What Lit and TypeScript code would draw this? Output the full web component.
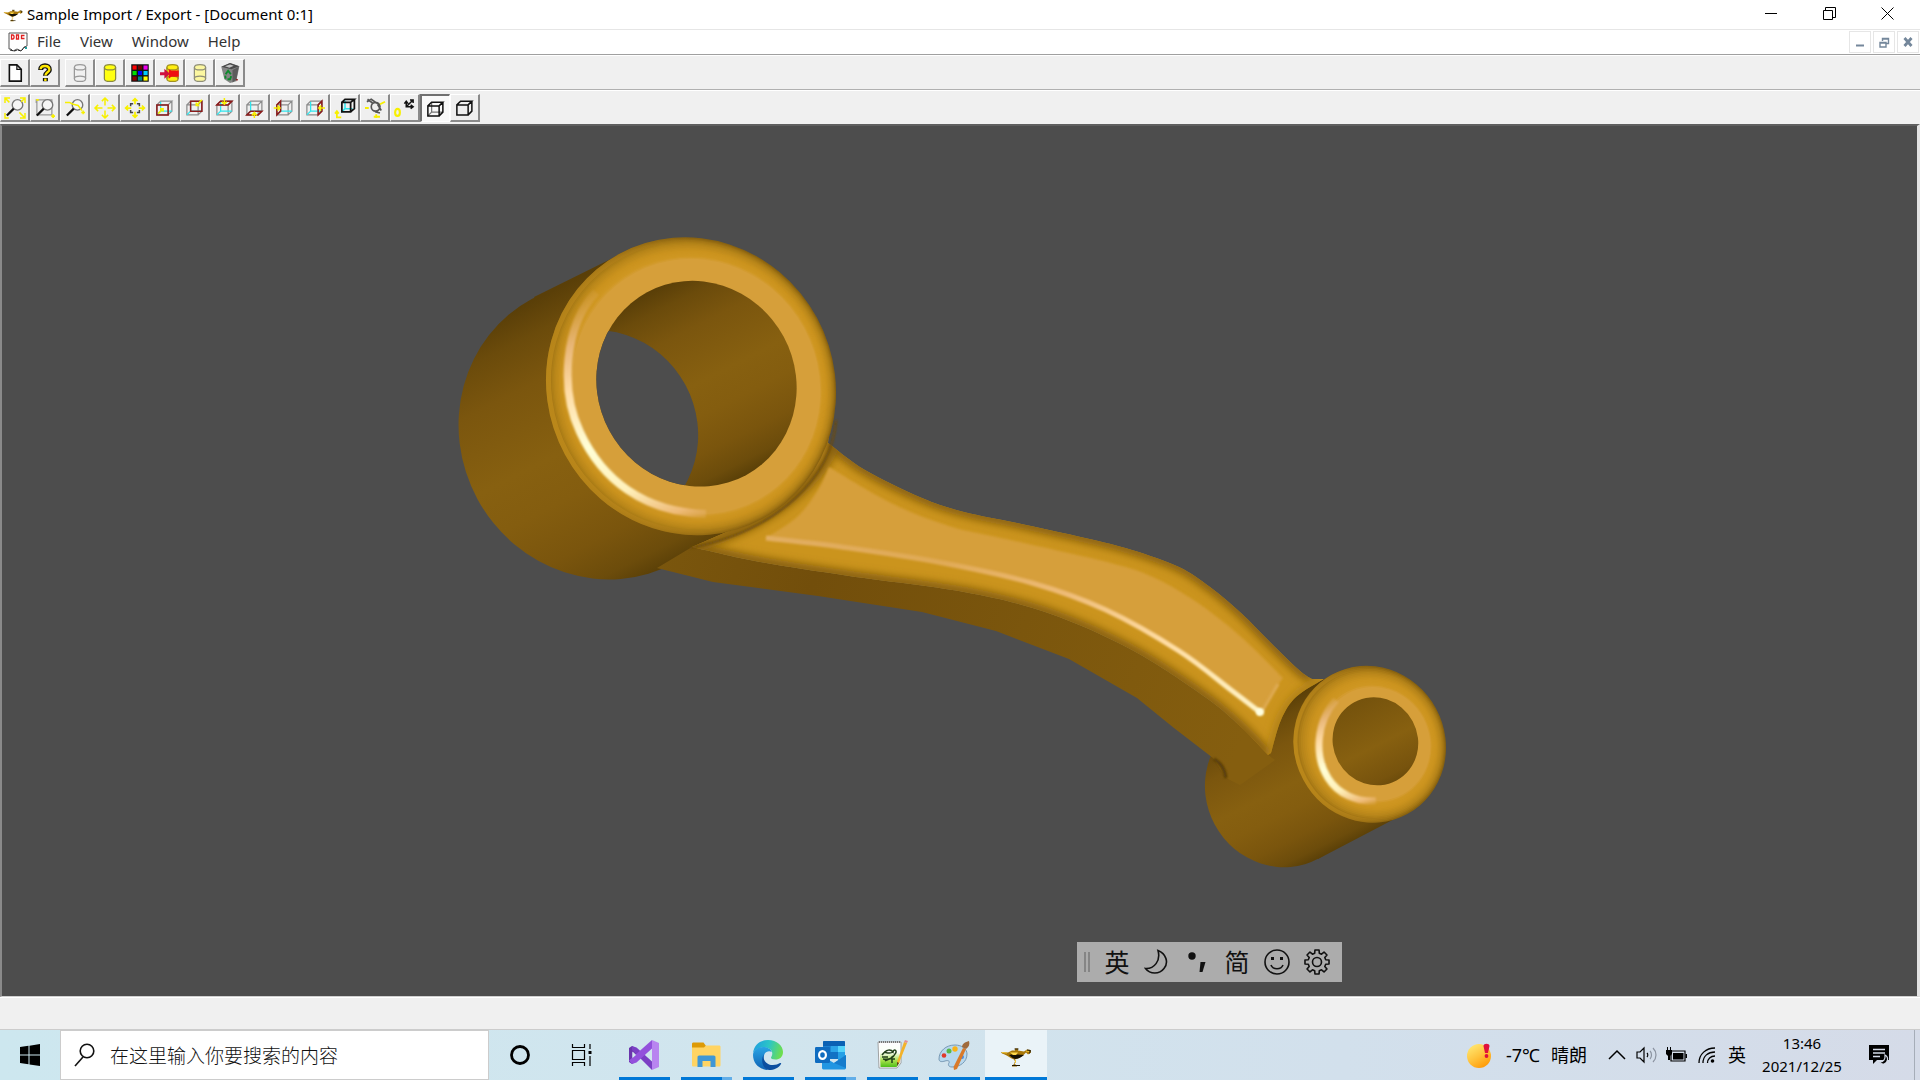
import { LitElement, html, svg, css, TemplateResult } from "lit";
import { customElement } from "lit/decorators.js";

type Point = [number, number];

/* ---------- toolbar glyphs, drawn on a 16 unit grid ---------- */

const glyph = (body: unknown) =>
  html`<svg class="glyph" viewBox="0 0 16 16" aria-hidden="true">${body}</svg>`;

const GREY = "#8c8c8c";
const RED = "#8b1a1a";
const CYAN = "#2fe6ee";
const YELLOW = "#f7f000";

const line = (d: string, color: string, width = 1) =>
  svg`<path d=${d} fill="none" stroke=${color} stroke-width=${width}></path>`;

const FACES: Record<string, string> = {
  front: "M1.5 5.5h9v8h-9z",
  back: "M4.5 2.5h9v8h-9z",
  top: "M1.5 5.5l3-3h9l-3 3z",
  bottom: "M1.5 13.5l3-3h9l-3 3z",
  left: "M1.5 5.5l3-3v8l-3 3z",
  right: "M10.5 5.5l3-3v8l-3 3z",
};

const cube = (face: string, arrow: string) =>
  glyph([
    line("M1.5 5.5h9v8h-9zM1.5 5.5l3-3h9l-3 3M13.5 2.5v8l-3 3", GREY),
    line("M4.5 3v7.500h9M4.500 10.500l-3 3", CYAN),
    line(FACES[face], RED, 1.2),
    line(arrow, YELLOW, 1.2),
  ]);

const solidCube = (hidden: unknown) => [
  hidden,
  line("M1.5 5.5h9v8h-9zM1.5 5.5l3-3h9l-3 3M13.5 2.5v8l-3 3", "#111", 1.2),
];

const lens = svg`
  <circle cx="10" cy="5.500" r="4.200" fill="#f6f6f6" stroke="#777" stroke-width="1.100"></circle>
  <path d="M7 8.500L1.500 14" stroke="#111" stroke-width="1.800"></path>`;

const cylinder = (fill: string, stroke: string, ring: boolean) => svg`
  <path d="M3.500 3.500c0-3 9-3 9 0v9c0 3-9 3-9 0z" fill=${fill} stroke=${stroke}></path>
  <path d="M3.500 3.500c0 2.700 9 2.700 9 0" fill="none" stroke=${stroke}></path>
  ${ring ? svg`<path d="M3.500 12.500c0-2.700 9-2.700 9 0" fill="none" stroke=${stroke}></path>` : ""}`;

const PALETTE = ["#f00", "#700000", "#e0e", "#0d0", "#00f", "#0cf", "#800", "#088", "#ff0"];

const fileTools: [string, TemplateResult][] = [
  ["New document", glyph(svg`<path d="M3.500 1.500h6l3.500 3.500v9.500h-9.500z" fill="#fff" stroke="#111" stroke-width="1.300"></path><path d="M9.500 1.500v3.500h3.500" fill="none" stroke="#111"></path>`)],
  ["About", glyph(svg`
    <path d="M4.500 5.500c0-4.500 7-4.500 7 0 0 2-3.200 2.200-3.200 4.700M8.300 12v2.600" fill="none" stroke="#111" stroke-width="4"></path>
    <path d="M4.500 5c.2-3.500 7-3.500 7 .3 0 2-3.200 2.200-3.200 4.700M8.300 12.300v2" fill="none" stroke="#ffe800" stroke-width="1.900"></path>`)],
];

const shapeTools: [string, TemplateResult][] = [
  ["Wireframe", glyph(cylinder("#f0f0f0", "#999", true))],
  ["Shading", glyph(cylinder("#ffff10", "#8a8a40", false))],
  ["Color", glyph(svg`<path d="M1 1h14v14H1z" fill="#111"></path>${PALETTE.map(
    (c, i) => svg`<path d="M${2 + (i % 3) * 4.4} ${2 + Math.floor(i / 3) * 4.4}h3.300v3.300h-3.300z" fill=${c}></path>`)}`)],
  ["Material", glyph(svg`<g transform="translate(2 0)">${cylinder("#ffee10", "#a09020", true)}</g><path d="M7 5l2 1h6v5H9L7 12.500z" fill="#f01010"></path><path d="M0 7.300h3.500V4.500L8 8.500l-4.500 4V9.700H0z" fill="#d0103c"></path>`)],
  ["Transparency", glyph(cylinder("#fbf7a0", "#8f8f78", true))],
  ["Delete", glyph(svg`
    <path d="M1 3l7-3 7.500 2.500-2.500 12-5 1.500L3.500 13z" fill="#858585"></path>
    <path d="M1 3l7-3 7.500 2.500L9 5z" fill="#4a4a4a"></path>
    <path d="M4 2.600l4-1.400 3 1-3.500 1.600z" fill="#c4c4c4"></path>
    <path d="M10 5.500l5-2.500-2 10.500-3 2z" fill="#5c5c5c"></path>
    <path d="M12.500 12.500l2 .5-1 1.500z" fill="#8b1a1a"></path>
    <path d="M4.500 9l2-2.800L8.700 9M9 10.500L8 13H6M4.500 12.500l-.3-2.400" fill="none" stroke="#0c8a2c" stroke-width="1.500"></path>`)],
];

const viewTools: [string, TemplateResult, boolean?][] = [
  ["Fit all", glyph([lens, line("M0 4V0h4M0 0l3.500 3.500M12 0h4v4M16 0l-3 3M12 16h4v-4M16 16l-4.500-4.500M0 12v4h3", YELLOW, 1.2)])],
  ["Zoom window", glyph([line("M1 1v3M1.500 1.500h12v12h-12z", "#999"), lens, line("M1 1.500h2M13 14.500h3M14.500 13v3", YELLOW, 1.4)])],
  ["Zoom", glyph([lens, line("M0 3.500h3.500l3 1.500 4 1 3 4M13 11.500h3M14.500 10v3", YELLOW, 1.2)])],
  ["Pan", glyph(line("M8 6V0M5.500 2.500L8 0l2.500 2.500M8 10v6M5.500 13.500L8 16l2.500-2.500M6 8H0M2.500 5.500L0 8l2.500 2.500M10 8h6M13.500 5.500L16 8l-2.500 2.500", YELLOW, 1.2))],
  ["Global pan", glyph([line("M8 5V0M6 2.500L8 .5l2 2M8 11v5M6 13.500l2 2 2-2M5 8H0M2.500 6L.5 8l2 2M11 8h5M13.500 6l2 2-2 2", YELLOW, 1.4), line("M4.500 6.500v-2h2M9.500 4.500h2v2M11.500 9.500v2h-2M6.500 11.500h-2v-2", "#444", 1.2)])],
  ["Front", cube("front", "M2.500 12.500l4-4M4 8.500h2.500V11")],
  ["Back", cube("back", "M13.500 1.500L9 6M9 3.500V6h2.500")],
  ["Top", cube("top", "M7.500 0v5M5.500 3l2 2 2-2")],
  ["Bottom", cube("bottom", "M7.500 16v-5M5.500 14l2-2.500 2 2.500")],
  ["Left", cube("left", "M-1 8h5M2 6l2 2-2 2")],
  ["Right", cube("right", "M16 8h-5M13 6l-2 2 2 2")],
  ["Axonometric", glyph([line("M8 2v6.500h6M8 8.500l-3 3", CYAN, 1.2), line("M5.500 3.500h7v7.500h-7zM5.500 3.500l2.500-2.500h7.500l-3 2.500M15.500 1v7.500l-3 2.500", "#111", 1.4), line("M5 15.500H1.500v-4M0 12.500l1.500-2 1.500 2", YELLOW, 1.4)])],
  ["Dynamic rotation", glyph([line("M2 1l4 3M1.500 3l3.500-2 5 3.500M12 7a3.500 3.500 0 1 1-7 0 3.500 3.500 0 0 1 7 0M10 5l3 5M12 12l-4-1", "#555", 1.3), line("M0 8h3M12 5l4-2M7 15h5M9 13v3", YELLOW, 1.5)])],
  ["Reset view", glyph([svg`<ellipse cx="2" cy="11.500" rx="1.900" ry="2.800" fill="none" stroke=${YELLOW} stroke-width="1.700"></ellipse>`, line("M9 3v4h5M9 7l5-5M7.500 4.500L9 2.500l1.500 2M12 1.500h2.500V4M12.500 5.500l2 1.500-2 1.500", "#111", 1.2)])],
  ["Hidden off", glyph(solidCube(line("M4.500 3v7.500h9M4.500 10.500l-3 3", "#777"))), true],
  ["Hidden on", glyph(solidCube(""))],
];

/* ---------- shaded part ---------- */

const TILT = 61.6;
const AXIS: Point = [Math.cos((TILT * Math.PI) / 180), Math.sin((TILT * Math.PI) / 180)];

/* Tilted oval as a path, so that shading stays in drawing coordinates. */
const ovalPath = (cx: number, cy: number, r: number) => {
  const dx = r * AXIS[0];
  const dy = r * AXIS[1];
  const arc = `A${r} ${r * 0.952} ${TILT} 0 1`;
  return `M${cx - dx} ${cy - dy}${arc} ${cx + dx} ${cy + dy}${arc} ${cx - dx} ${cy - dy}Z`;
};
const oval = (cx: number, cy: number, r: number, fill: string) =>
  svg`<path d=${ovalPath(cx, cy, r)} fill=${fill}></path>`;

const mix = (stops: [number, number[]][], t: number) => {
  let i = 1;
  while (i < stops.length - 1 && stops[i][0] < t) i++;
  const [t0, a] = stops[i - 1];
  const [t1, b] = stops[i];
  const k = (t - t0) / (t1 - t0);
  return `rgb(${a.map((v, n) => Math.round(v + (b[n] - v) * k)).join(",")})`;
};

const RIM: [number, number[]][] = [
  [0, [138, 99, 16]],
  [0.12, [162, 117, 20]],
  [0.3, [184, 134, 26]],
  [0.6, [203, 147, 30]],
  [0.85, [207, 151, 34]],
  [1, [214, 159, 58]],
];

/* A rolled rim: nested ovals running from the silhouette in to the flat face. */
const rim = (outer: number[], inner: number[], steps: number) =>
  Array.from({ length: steps + 1 }, (_, i) => {
    const t = i / steps;
    const [x, y, r] = outer.map((v, n) => v + (inner[n] - v) * t);
    return oval(x, y, r, mix(RIM, t));
  });

/* Smooth curve through a list of points. */
const through = (pts: Point[], start = "M") => {
  let d = `${start}${pts[0][0]} ${pts[0][1]}`;
  for (let i = 0; i < pts.length - 1; i++) {
    const p0 = pts[Math.max(i - 1, 0)];
    const p1 = pts[i];
    const p2 = pts[i + 1];
    const p3 = pts[Math.min(i + 2, pts.length - 1)];
    d += `C${p1[0] + (p2[0] - p0[0]) / 6} ${p1[1] + (p2[1] - p0[1]) / 6} ${p2[0] - (p3[0] - p1[0]) / 6} ${p2[1] - (p3[1] - p1[1]) / 6} ${p2[0]} ${p2[1]}`;
  }
  return d;
};

const ridge: Point[] = [[828, 443], [865, 470], [922, 498], [964, 512], [1017, 523], [1085, 538], [1132, 550], [1179, 567], [1210, 587], [1241, 613], [1268, 640], [1299, 670], [1312, 679]];
const faceTop: Point[] = [[829, 467], [891, 503], [949, 526], [1006, 539], [1111, 563], [1153, 577], [1189, 597], [1221, 620], [1252, 647], [1283, 678]];
const faceLow: Point[] = [[1261, 713], [1231, 690], [1179, 651], [1106, 610], [1032, 583], [943, 563], [849, 548], [766, 538]];
const faceLeft: Point[] = [[766, 538], [797, 517], [818, 490], [829, 467]];
const rollLow: Point[] = [[1268, 755], [1241, 727], [1205, 697], [1132, 650], [1048, 613], [964, 592], [849, 576], [760, 562], [692, 547]];
const joint: Point[] = [[1324, 679], [1296, 697], [1281, 720], [1271, 753]];
const keel: Point[] = [[657, 568], [713, 582], [818, 596], [922, 612], [996, 631], [1069, 659], [1137, 698], [1174, 728], [1213, 758]];

const armShape = `${through(ridge)}L1324 679${through(joint, "L")}${through(rollLow, "L")}L740 526L830 420Z`;
const faceShape = `${through(faceTop)}Q1270 695 1261 713${through(faceLow, "L")}${through(faceLeft, "L")}Z`;
const flank = `M${keel.map((p) => p.join(" ")).join("L")}L1226 778L1240 785L1275 760${through(rollLow, "L")}Z`;

const barrelStops = svg`
  <stop offset="0" stop-color="#5a3f08"></stop>
  <stop offset=".1" stop-color="#6b4b0b"></stop>
  <stop offset=".25" stop-color="#7b560e"></stop>
  <stop offset=".5" stop-color="#876010"></stop>
  <stop offset=".65" stop-color="#845d0f"></stop>
  <stop offset=".82" stop-color="#7a550d"></stop>
  <stop offset=".94" stop-color="#6c4c0b"></stop>
  <stop offset="1" stop-color="#5c4108"></stop>`;

const shineStops = svg`
  <stop offset="0" stop-color="#dba655" stop-opacity="0"></stop>
  <stop offset=".2" stop-color="#e8b676"></stop>
  <stop offset=".36" stop-color="#ffdca6"></stop>
  <stop offset=".58" stop-color="#ffffd6"></stop>
  <stop offset=".78" stop-color="#fff0ba"></stop>
  <stop offset=".92" stop-color="#efbb78"></stop>
  <stop offset="1" stop-color="#dba655" stop-opacity="0"></stop>`;

const part = svg`
  <defs>
    <linearGradient id="barrelA" gradientUnits="userSpaceOnUse" x1="536" y1="299" x2="670" y2="563">${barrelStops}</linearGradient>
    <linearGradient id="boreA" gradientUnits="userSpaceOnUse" x1="650" y1="292" x2="743" y2="475">${barrelStops}</linearGradient>
    <linearGradient id="barrelB" gradientUnits="userSpaceOnUse" x1="1246" y1="719" x2="1316" y2="859">${barrelStops}</linearGradient>
    <linearGradient id="boreB" gradientUnits="userSpaceOnUse" x1="1353" y1="697" x2="1402" y2="793">
      <stop offset="0" stop-color="#73510c"></stop><stop offset=".5" stop-color="#876010"></stop><stop offset=".8" stop-color="#77530d"></stop><stop offset="1" stop-color="#5c4108"></stop>
    </linearGradient>
    <linearGradient id="flankFill" gradientUnits="userSpaceOnUse" x1="660" y1="560" x2="1230" y2="770">
      <stop offset="0" stop-color="#7a560d"></stop><stop offset=".25" stop-color="#724e0b"></stop><stop offset=".6" stop-color="#7b560d"></stop><stop offset="1" stop-color="#855e0f"></stop>
    </linearGradient>
    <linearGradient id="edgeLight" x1="0" y1=".6" x2="1" y2=".4">
      <stop offset="0" stop-color="#bb881a"></stop><stop offset=".3" stop-color="#b4821a" stop-opacity=".7"></stop><stop offset=".6" stop-color="#a87a18" stop-opacity="0"></stop>
    </linearGradient>
    <linearGradient id="shineA" gradientUnits="userSpaceOnUse" x1="600" y1="278" x2="690" y2="530">${shineStops}</linearGradient>
    <linearGradient id="shineB" gradientUnits="userSpaceOnUse" x1="1330" y1="690" x2="1372" y2="808">${shineStops}</linearGradient>
    <linearGradient id="shineArm" gradientUnits="userSpaceOnUse" x1="766" y1="0" x2="1262" y2="0">
      <stop offset="0" stop-color="#e2ae62"></stop><stop offset=".35" stop-color="#e0aa56"></stop><stop offset=".6" stop-color="#eebb76"></stop><stop offset=".8" stop-color="#ffdca2"></stop><stop offset="1" stop-color="#fff4c6"></stop>
    </linearGradient>
    <filter id="soft1" x="-20%" y="-20%" width="140%" height="140%"><feGaussianBlur stdDeviation="1"></feGaussianBlur></filter>
    <filter id="soft4" x="-20%" y="-20%" width="140%" height="140%"><feGaussianBlur stdDeviation="4"></feGaussianBlur></filter>
    <clipPath id="armClip"><path d=${armShape}></path></clipPath>
    <clipPath id="boreClip"><path d=${ovalPath(696.5, 383.7, 104)}></path></clipPath>
  </defs>

  ${oval(603, 431, 150, "url(#barrelA)")}
  <path d="M534 297L627 251L760 518L671 564Z" fill="url(#barrelA)"></path>

  ${oval(1281, 789, 79, "url(#barrelB)")}
  <path d="M1246 719L1324 679L1404 814L1318 859Z" fill="url(#barrelB)"></path>

  <path d=${flank} fill="url(#flankFill)"></path>
  <path d="M1214 759C1221 763 1225 770 1226 778" fill="none" stroke="#553b07" stroke-width="3" filter="url(#soft1)"></path>

  <path d=${armShape} fill="#cb941d"></path>
  <g clip-path="url(#armClip)">
    <path d=${through(ridge)} fill="none" stroke="#805a10" stroke-width="9" filter="url(#soft4)"></path>
    <path d=${through(rollLow)} fill="none" stroke="#805a10" stroke-width="10" filter="url(#soft4)"></path>
    <path d=${through(joint)} fill="none" stroke="#a87a18" stroke-width="7" filter="url(#soft4)"></path>
    <path d="M838 420C838 470 780 520 690 548" fill="none" stroke="#8a6210" stroke-width="12" filter="url(#soft4)"></path>
    <path d=${faceShape} fill="#d69f3a" filter="url(#soft1)"></path>
    <path d=${through(faceLow)} fill="none" stroke="url(#shineArm)" stroke-width="5" filter="url(#soft1)"></path>
    <path d="M1261 713L1278 684" stroke="#dfab55" stroke-width="3" filter="url(#soft1)"></path>
    <circle cx="1260" cy="712" r="4" fill="#ffffe0" filter="url(#soft1)"></circle>
  </g>
  <path d="M836 420C832 476 780 530 690 548" fill="none" stroke="#6b4b0b" stroke-width="2" filter="url(#soft1)"></path>

  ${rim([691, 386.3, 150.6], [696, 386.5, 129], 18)}
  <path d=${ovalPath(691, 386.3, 148)} fill="none" stroke="url(#edgeLight)" stroke-width="5"></path>
  <path d="M596 292C564 326 560 390 580 432C602 480 644 512 706 514" fill="none" stroke="url(#shineA)" stroke-width="8" filter="url(#soft1)"></path>
  ${oval(696.5, 383.7, 104, "url(#boreA)")}
  <g clip-path="url(#boreClip)">${oval(600, 431, 102, "#4d4d4d")}</g>

  ${rim([1369.6, 744.3, 79.3], [1375, 744, 57.5], 14)}
  <path d=${ovalPath(1369.6, 744.3, 77)} fill="none" stroke="url(#edgeLight)" stroke-width="4"></path>
  <path d="M1336 700C1316 722 1314 756 1328 778C1338 794 1356 802 1376 801" fill="none" stroke="url(#shineB)" stroke-width="7" filter="url(#soft1)"></path>
  ${oval(1375.4, 741.3, 44.5, "url(#boreB)")}`;

/* ---------- application icons ---------- */

const lamp = html`<svg class="app-icon" viewBox="0 0 32 32" aria-hidden="true">
  <path d="M1 13l7 .5 4-2h3V9.500h3v2l6 1 3-2 3.500.5.5 2.500-3 2-2-2-3 3-4 2.500-4 1.500-1 4 3 2v1H12v-1l3-2-1-4c-5-2-6-4-12-6z" fill="#a87708"></path>
  <path d="M9 16c5-1 11 0 15 0-3 2.500-6 4-9 4-2.500-1-4-2-6-4z" fill="#161005"></path>
  <path d="M10 13.500h8l-2 2.500h-3z" fill="#ffd84a"></path>
  <path d="M2 13.500l5 .5M26 12l3 .5M15.500 21v3" stroke="#f2c63a" fill="none"></path>
  <path d="M12 26.500h8M14.500 10h4M27 11l3.500.5-1 3" stroke="#241a04" fill="none"></path></svg>`;

const taskApps: { name: string; icon: TemplateResult; mode?: string }[] = [
  {
    name: "Visual Studio",
    icon: html`<svg class="app-icon" viewBox="0 0 32 32" aria-hidden="true">
      <path d="M1 9l3-2 4 2.500v13L4 25l-3-2z" fill="#6a34ac"></path>
      <path d="M4.500 12.500L8 16l-3.500 3.500z" fill="#d3e5ee"></path>
      <path d="M4 7l4.500 1.500L24 22.500V31L4 11z" fill="#7a3fc4"></path>
      <path d="M4 25l4.500-1.500L24 9.500V1L1 21.500z" fill="#9351dc"></path>
      <path d="M4.500 13v6L8 16z" fill="#d3e5ee"></path>
      <path d="M24 1l7 3v24l-7 3z" fill="#b884f0"></path></svg>`,
  },
  {
    name: "File Explorer",
    mode: "multi",
    icon: html`<svg class="app-icon" viewBox="0 0 32 32" aria-hidden="true">
      <path d="M2 5c0-1 .5-1.500 1.500-1.500h10L16 7v5H2z" fill="#dd9a06"></path>
      <path d="M2 8.500h12L16 6.500h13c1 0 1.500.5 1.500 1.500v18c0 1-.5 1.500-1.500 1.500H3.500C2.500 27.500 2 27 2 26z" fill="#ffd463"></path>
      <path d="M7.500 28V18.500c0-1.200.6-1.900 1.800-1.900h14.400c1.200 0 1.800.7 1.800 1.900V28h-5v-6h-8v6z" fill="#3f97d6"></path></svg>`,
  },
  {
    name: "Microsoft Edge",
    icon: html`<svg class="app-icon" viewBox="0 0 32 32" aria-hidden="true">
      <defs>
        <linearGradient id="edgeTop" x1="0" y1=".3" x2="1" y2=".5"><stop offset="0" stop-color="#1e9fe0"></stop><stop offset=".5" stop-color="#2cc5c6"></stop><stop offset="1" stop-color="#6fdf4c"></stop></linearGradient>
        <linearGradient id="edgeLow" x1="0" y1="0" x2="0" y2="1"><stop offset="0" stop-color="#2aa4e4"></stop><stop offset="1" stop-color="#0f62b4"></stop></linearGradient>
      </defs>
      <path d="M1 14C2 6 8 1 16 1c9 0 15 6 15 12 0 5-3.500 7.500-7.500 7.500-3.500 0-4.500-1-4.500-2 0-.8 1.300-1.500 1.300-4C20.300 11 17 8.500 12 8.500 6 8.500 2.500 11 1 14z" fill="url(#edgeTop)"></path>
      <path d="M1 16c0-4.500 5-8 10-8 4.500 0 8 2 8.800 5-2-1.500-5.800-1-7.300 2C10 20 13 31 17 31 8 31 1 25 1 16z" fill="url(#edgeLow)"></path>
      <path d="M12 15c-2 5 2 11 9 11 3 0 5-.8 7-2 1-.4 1.500.3 1 1C26.500 29 22 31 17 31 10 30 8.500 20 12 15z" fill="#0c4fa0"></path></svg>`,
  },
  {
    name: "Outlook",
    mode: "multi",
    icon: html`<svg class="app-icon" viewBox="0 0 32 32" aria-hidden="true">
      <path d="M9 3c0-.6.400-1 1-1h20c.6 0 1 .4 1 1v16H9z" fill="#0a61b4"></path>
      <path d="M9 7h7.500v6H9z" fill="#1a7fd0"></path><path d="M16.500 7H24v6h-7.500z" fill="#2ba4e8"></path><path d="M24 7h7v6h-7z" fill="#54d3fa"></path>
      <path d="M9 13h15v7H9z" fill="#1272c4"></path><path d="M24 13h7v6l-7 3z" fill="#26a0e6"></path>
      <path d="M8 17l12 7 12-8v13c0 .8-.6 1.400-1.400 1.400H9.400C8.600 30.400 8 29.800 8 29z" fill="#2196e2"></path>
      <path d="M20 24l12-8v13z" fill="#167ccc"></path>
      <rect x="1" y="8" width="15" height="16" rx="1.200" fill="#0f6cc0"></rect>
      <ellipse cx="8.500" cy="16" rx="3.400" ry="3.900" fill="none" stroke="#fff" stroke-width="2.200"></ellipse></svg>`,
  },
  {
    name: "Notepad++",
    icon: html`<svg class="app-icon" viewBox="0 0 32 32" aria-hidden="true">
      <defs><linearGradient id="padFill" x1="0" y1="0" x2="0" y2="1"><stop offset=".3" stop-color="#fcfffa"></stop><stop offset=".7" stop-color="#a4e04c"></stop><stop offset="1" stop-color="#4fbf18"></stop></linearGradient></defs>
      <path d="M2 3h23v21l-4 5H3z" fill="#fdfdfd" stroke="#8d8d8d" stroke-width=".8"></path>
      <path d="M3.500 7h20v17l-3 4h-16z" fill="url(#padFill)"></path>
      <path d="M3 3h22" stroke="#777" stroke-width="2" stroke-dasharray="1 1"></path>
      <path d="M6 16c4-6 9-6 11-3 1-4 5-1 2 2-2 4-6 6-12 5M8 13c4 1 6 2 9 0M9 22c2-2 5 0 8-5M16 24v-4h3M6 18h6" fill="none" stroke="#22401a" stroke-width="1.500"></path>
      <path d="M28 3l3 1-8 20-2 2v-3z" fill="#f3b229"></path><path d="M28 3l1-2 3 1-1 2z" fill="#e58f8f"></path><path d="M21 23l2 1-2 3z" fill="#5a4020"></path></svg>`,
  },
  {
    name: "Paint",
    icon: html`<svg class="app-icon" viewBox="0 0 32 32" aria-hidden="true">
      <path d="M1 20C1 12 8 6 17 6c7 0 12 4 12 9 0 8-7 13-15 13-4 0-4-3-3-4 1-2-1-3-4-2-3 1-6 1-6-2z" fill="#b7d8ee" stroke="#7899b4"></path>
      <circle cx="6" cy="16.500" r="2.300" fill="#e03a2c"></circle><circle cx="11" cy="12" r="2.500" fill="#58b848"></circle><circle cx="17" cy="10" r="2.700" fill="#f7b318"></circle>
      <circle cx="24" cy="18" r="2" fill="#4b8be0"></circle>
      <path d="M25 9l3 1-9 20-3 1-.5-3z" fill="#d97a2a"></path><path d="M24 8c0-3 3-5 7-6 1 3 0 6-3 8z" fill="#a06a3c"></path></svg>`,
  },
  { name: "Sample Import / Export", icon: lamp, mode: "active" },
];

@customElement("app-root")
export class AppRoot extends LitElement {
  static styles = css`
    :host {
      display: flex;
      flex-direction: column;
      height: 100vh;
      min-height: 600px;
      background: #f0f0f0;
      color: #000;
      font: 15px/20px "Noto Sans", "Noto Sans CJK SC", sans-serif;
      overflow: hidden;
    }
    * { box-sizing: border-box; }
    button {
      display: flex;
      align-items: center;
      justify-content: center;
      margin: 0;
      padding: 0;
      border: 0;
      background: none;
      color: inherit;
      font: inherit;
    }
    svg { display: block; flex: none; }

    .title-bar { display: flex; align-items: center; height: 29px; flex: none; background: #fff; padding: 0 4px 2px 3px; }
    .title-bar .app-icon { width: 20px; height: 20px; }
    .title { flex: 1; margin: 0 0 0 4px; font: inherit; }
    .window-button { width: 58px; height: 27px; }

    .menu-bar { display: flex; align-items: center; height: 26px; flex: none; background: #fff; border-top: 1px solid #e6e6e6; border-bottom: 1px solid #a0a0a0; padding: 0 1px 0 8px; }
    .menus { display: flex; flex: 1; gap: 19px; height: 24px; padding-bottom: 3px; margin-left: 9px; color: #333; }
    .child-buttons { display: flex; gap: 2px; }
    .child-button { width: 22px; height: 22px; border: 1px solid #e6e6e6; }

    .tool-row { display: flex; height: 35px; flex: none; padding: 4px 0 3px; border-bottom: 1px solid #b0b0b0; box-shadow: inset 0 1px #fff; }
    .tool-row.last { border-bottom: 0; height: 34px; }
    .tool-group { display: flex; }
    .tool-group + .tool-group { margin-left: 5px; }
    .tool { width: 30px; height: 28px; border: solid; border-width: 1px 2px 2px 1px; border-color: #fff #8a8a8a #8a8a8a #fff; background: #efefef; }
    .tool.pressed { border-width: 2px 1px 1px 2px; border-color: #707070 #fff #fff #707070; background: #f9f9f9; }
    .glyph { width: 20px; height: 20px; overflow: visible; }

    .viewport { position: relative; flex: 1; min-height: 0; background: #4d4d4d; border: solid; border-width: 2px 3px 1px 2px; border-color: #5f5f5f #e3e3e3 #d0d0d0 #8a8a8a; }
    .scene { width: 100%; height: 100%; }
    .ime { position: absolute; right: 575px; bottom: 14px; display: flex; align-items: center; height: 40px; padding: 0 5px 0 7px; background: #acacac; }
    .grip { width: 6px; height: 20px; margin-right: 7px; border: solid #858585; border-width: 0 2px; }
    .ime-button { width: 40px; height: 40px; font-size: 25px; line-height: 40px; color: #111; }

    .status { flex: none; height: 33px; border-top: 1px solid #fff; border-bottom: 1px solid #ccc; }

    .task-bar { display: flex; flex: none; height: 50px; background: linear-gradient(90deg, #cde7ef, #d1e5ee 40%, #d2e0ec 70%, #d5dbe8); }
    .start { width: 60px; height: 50px; }
    .search { display: flex; align-items: center; width: 429px; padding-left: 13px; gap: 15px; background: #fff; border: 1px solid #ccc; }
    .search input { flex: 1; min-width: 0; border: 0; outline: 0; background: none; padding: 0; font: 300 19px/28px "Noto Sans CJK SC", sans-serif; }
    .search input::placeholder { color: #111; opacity: 1; }
    .task { position: relative; width: 62px; height: 50px; }
    .task .app-icon { width: 32px; height: 32px; }
    .running::after { content: ""; position: absolute; left: 6px; right: 5px; bottom: 0; height: 3px; background: #0078d7; }
    .multi::after { background: linear-gradient(90deg, #0078d7 41px, #62aee8 41px); }
    .active { background: #eaf3f8; }
    .active::after { left: 0; right: 0; }

    .tray { display: flex; align-items: center; margin-left: auto; }
    .weather { gap: 11px; height: 50px; margin-right: 15px; font-size: 18px; }
    .weather svg { margin-right: 3px; }
    .tray-button { width: 30px; height: 50px; }
    .language { font-size: 18px; }
    .clock { flex-direction: column; width: 100px; height: 50px; font-size: 15px; line-height: 23px; }
    .notes { width: 60px; height: 50px; margin-left: -3px; }
    .desktop { width: 6px; height: 50px; border-left: 1px solid #a6adb8; margin-left: 5px; }
  `;

  private tool([name, icon, pressed]: [string, TemplateResult, boolean?]) {
    return html`<button class="tool ${pressed ? "pressed" : ""}" aria-label=${name}>${icon}</button>`;
  }

  render() {
    return html`
      <header class="title-bar">
        ${lamp}
        <h1 class="title">Sample Import / Export - [Document 0:1]</h1>
        <button class="window-button" aria-label="Minimize">
          <svg width="12" height="12"><path d="M0 5.500h12" stroke="#000"></path></svg>
        </button>
        <button class="window-button" aria-label="Restore">
          <svg width="13" height="13" fill="none" stroke="#000"><path d="M.5 3.500h9v9h-9zM2.500 3.500v-3h10v10h-3"></path></svg>
        </button>
        <button class="window-button" aria-label="Close">
          <svg width="13" height="13" stroke="#000"><path d="M.5.5l12 12M12.500.5l-12 12"></path></svg>
        </button>
      </header>

      <nav class="menu-bar">
        <svg width="20" height="20" viewBox="0 0 20 20" aria-hidden="true">
          <path d="M1 1h18v13l-3 1-3 4-4-2-4 2-2-2H1z" fill="#fff" stroke="#555"></path>
          <path d="M2 18l4 1 4-1 3 1 4-4" fill="none" stroke="#222" stroke-dasharray="3 1"></path>
          <path d="M3.500 3v4h1.500l1-1V4L5 3zM8.500 3h2v4h-2zM16.500 3.500h-3v3h3" fill="none" stroke="#e02020" stroke-width="1.300"></path>
          <path d="M17 16h2" stroke="#20a0a0" stroke-width="2"></path>
        </svg>
        <div class="menus">
          <button>File</button><button>View</button><button>Window</button><button>Help</button>
        </div>
        <div class="child-buttons">
          <button class="child-button" aria-label="Minimize document">
            <svg width="10" height="12"><path d="M1 9.500h8" stroke="#74879b" stroke-width="2"></path></svg>
          </button>
          <button class="child-button" aria-label="Restore document">
            <svg width="11" height="11" fill="none" stroke="#74879b"><path d="M1 5.500h6v4.500h-6zM1 6h6M3.500 4V1.500h6v5H7.500M3.500 2h6" stroke-width="1.400"></path></svg>
          </button>
          <button class="child-button" aria-label="Close document">
            <svg width="10" height="10" stroke="#74879b" stroke-width="2.800"><path d="M1.500 1l7 8M8.500 1l-7 8"></path></svg>
          </button>
        </div>
      </nav>

      <div class="tool-row" role="toolbar" aria-label="Standard">
        <div class="tool-group">${fileTools.map((t) => this.tool(t))}</div>
        <div class="tool-group">${shapeTools.map((t) => this.tool(t))}</div>
      </div>
      <div class="tool-row last" role="toolbar" aria-label="View">
        <div class="tool-group">${viewTools.map((t) => this.tool(t))}</div>
      </div>

      <main class="viewport">
        <svg class="scene" viewBox="2 126 1915 870" role="img" aria-label="Shaded connecting arm">${part}</svg>
        <div class="ime">
          <span class="grip"></span>
          <button class="ime-button">英</button>
          <button class="ime-button" aria-label="Half width">
            <svg width="26" height="26" fill="none" stroke="#111" stroke-width="1.600"><path d="M14 1.500c8 3 11 12 6 18-4.500 6-14 6-18.500 0C10 20 17 12 14 1.500z"></path></svg>
          </button>
          <button class="ime-button" aria-label="Punctuation">
            <svg width="20" height="24"><circle cx="5" cy="6" r="3.700" fill="#111"></circle><path d="M13.500 12h5l-3 10h-3z" fill="#111"></path></svg>
          </button>
          <button class="ime-button">简</button>
          <button class="ime-button" aria-label="Emoji">
            <svg width="26" height="26" fill="none" stroke="#111" stroke-width="1.600"><circle cx="13" cy="13" r="12"></circle><path d="M7 16c2 5 10 5 12 0"></path><path d="M8.500 8v3M17.500 8v3" stroke-width="3"></path></svg>
          </button>
          <button class="ime-button" aria-label="Settings">
            <svg width="26" height="26" viewBox="-13 -13 26 26" fill="none" stroke="#111" stroke-width="1.600">
              <circle r="4.500"></circle>
              <path stroke-linejoin="round" d=${this.gear()}></path>
            </svg>
          </button>
        </div>
      </main>

      <div class="status" role="status"></div>

      <footer class="task-bar">
        <button class="start" aria-label="Start">
          <svg width="20" height="22"><path d="M0 3l8.500-1.200v8.700H0zM9.500 1.700L20 0v10.500H9.500zM0 11.500h8.500v8.700L0 19zM9.500 11.500H20V22L9.500 20.400z"></path></svg>
        </button>
        <label class="search">
          <svg width="21" height="24" fill="none" stroke="#111" stroke-width="1.600"><circle cx="13" cy="8" r="6.800"></circle><path d="M9 14L1 23"></path></svg>
          <input type="search" aria-label="搜索" placeholder="在这里输入你要搜索的内容" />
        </label>
        <button class="task" aria-label="Cortana">
          <svg width="22" height="22" fill="none" stroke="#000" stroke-width="2.800"><circle cx="11" cy="11" r="8.500"></circle></svg>
        </button>
        <button class="task" aria-label="Task view">
          <svg width="22" height="22" fill="none" stroke="#000" stroke-width="1.200"><path d="M1.500 0v3.500h12V0M1.500 22v-3.500h12V22M1.500 6.500h12v9h-12zM19 0v5M19 12v10"></path><path d="M17.500 7h3v3h-3z" fill="#000" stroke="none"></path></svg>
        </button>
        ${taskApps.map((a) => html`<button class="task running ${a.mode ?? ""}" aria-label=${a.name}>${a.icon}</button>`)}

        <div class="tray">
          <button class="weather">
            <svg width="25" height="25" aria-hidden="true">
              <defs><linearGradient id="sun" x1=".2" y1="0" x2=".8" y2="1"><stop offset="0" stop-color="#ffe873"></stop><stop offset=".5" stop-color="#ffc33c"></stop><stop offset="1" stop-color="#ff9500"></stop></linearGradient></defs>
              <circle cx="12" cy="13" r="12" fill="url(#sun)"></circle>
              <path d="M16.500 3c0-3 6-3 6 0l-1.500 7h-3z" fill="#e0103a"></path><circle cx="19.500" cy="13" r="1.900" fill="#e0103a"></circle>
            </svg>
            <span>-7℃</span><span>晴朗</span>
          </button>
          <button class="tray-button" aria-label="Show hidden icons">
            <svg width="18" height="12" fill="none" stroke="#000" stroke-width="1.500"><path d="M1 10l8-8 8 8"></path></svg>
          </button>
          <button class="tray-button" aria-label="Volume">
            <svg width="22" height="18" fill="none" stroke="#000" stroke-width="1.200"><path d="M1 6h3l4-4v14l-4-4H1zM11 7c1 1 1 3 0 4"></path><path d="M14 5c2 2 2 6 0 8M17 2c4 4 4 10 0 14" stroke="#8b93a0"></path></svg>
          </button>
          <button class="tray-button" aria-label="Battery">
            <svg width="22" height="16"><path d="M5 4h14v10H5z" fill="none" stroke="#000" stroke-width="1.200"></path><path d="M7 6h10.500v6.500H7zM19.500 7H21v4h-1.500z"></path><path d="M0 3h6v4L4 9v4H2V9L0 7zM1 0h1v3H1zM4 0h1v3H4z"></path></svg>
          </button>
          <button class="tray-button" aria-label="Network">
            <svg width="18" height="18" fill="none" stroke="#000" stroke-width="1.300"><path d="M1 17C1 8 8 2 17 2M5 17C5 10 10 6 17 6M9.500 17c0-4 3-7 7.500-7"></path><circle cx="14.500" cy="15" r="1.800" fill="#000" stroke="none"></circle></svg>
          </button>
          <button class="tray-button language">英</button>
          <button class="clock"><span>13:46</span><span>2021/12/25</span></button>
          <button class="notes" aria-label="Notifications">
            <svg width="22" height="22"><path d="M1 1h20v15H9l-4 4v-4H1z"></path><path d="M5 5.500h12M5 9h12M5 12.500h7" stroke="#d5dbe8" stroke-width="1.500"></path><path d="M17 11c4 2 3 8-1 9-2 .4-3.500-.5-4.500-2 4 .5 6-3 5.500-7z" stroke="#d5dbe8" stroke-width="1.200"></path></svg>
          </button>
          <button class="desktop" aria-label="Show desktop"></button>
        </div>
      </footer>
    `;
  }

  /* Outline of an eight-toothed cog centred on the origin. */
  private gear() {
    const pts: string[] = [];
    for (let i = 0; i < 8; i++) {
      const base = (i * Math.PI) / 4;
      for (const [r, a] of [[9, -0.26], [12.2, -0.17], [12.2, 0.17], [9, 0.26]]) {
        pts.push(`${(r * Math.sin(base + a)).toFixed(2)} ${(-r * Math.cos(base + a)).toFixed(2)}`);
      }
    }
    return `M${pts.join("L")}Z`;
  }
}
